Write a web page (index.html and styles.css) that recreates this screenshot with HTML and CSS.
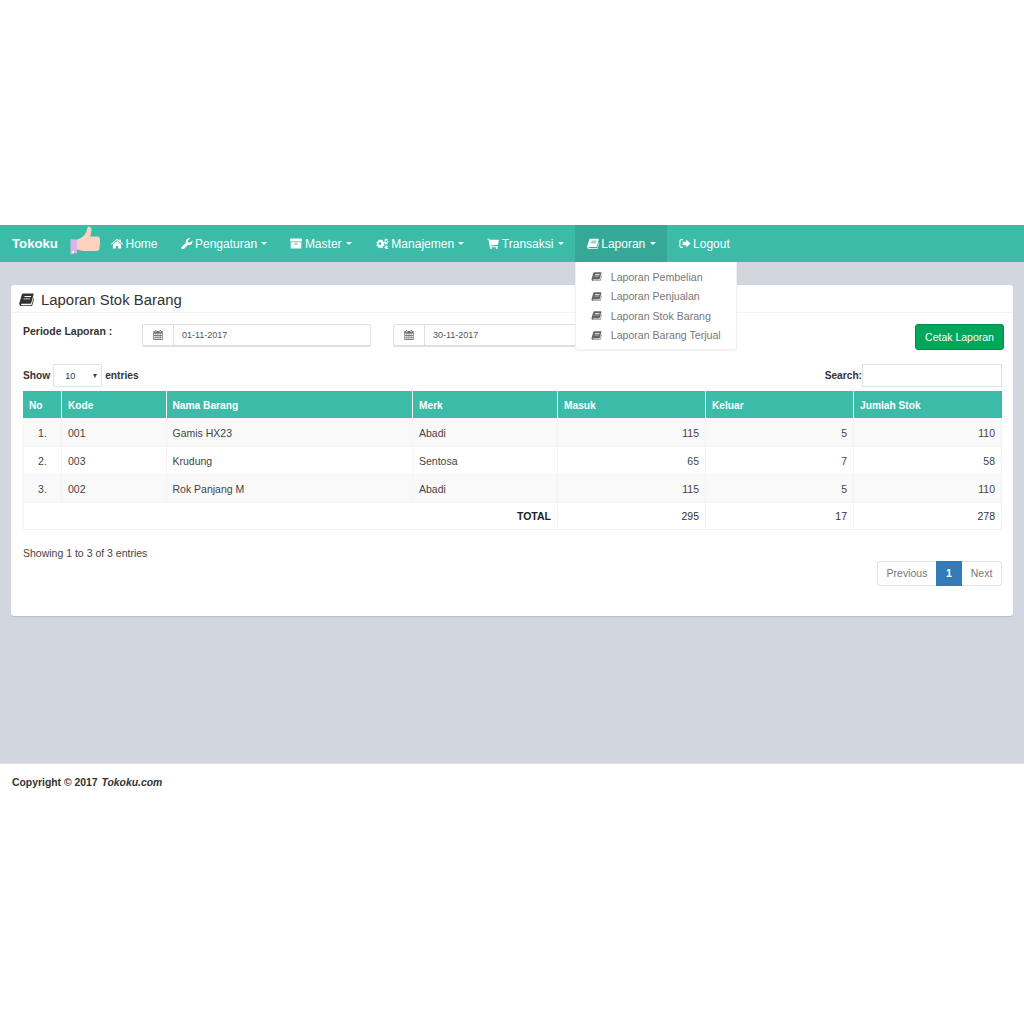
FILE: index.html
```html
<!DOCTYPE html>
<html lang="id">
<head>
<meta charset="utf-8">
<title>Tokoku - Laporan Stok Barang</title>
<link rel="stylesheet" href="styles.css">
</head>
<body>
<svg class="defs" width="0" height="0" aria-hidden="true">
  <defs>
    <symbol id="i-book" viewBox="0 0 16 14">
      <path d="M4.600 0.500H15c.5 0 .8.4.7.9l-2.500 9.200c-.2.700-.7 1.100-1.400 1.100H3.200c-.7 0-1.100.3-1.100.8s.4.800 1.100.8h9.200c.6 0 1-.3 1.200-.8l2-7.200.4.300c.2.200.2.400.2.700l-2.300 7.900c-.2.600-.7 1-1.300 1H2.900C1.400 14 .2 12.900.2 11.600c0-.3 0-.6.1-.9L3 1.700C3.200 1 3.800.5 4.600.5zM5.900 3.200l-.3 1h7l.3-1h-7zM5 5.800l-.3 1h7l.3-1H5z" fill-rule="evenodd"/>
    </symbol>
    <symbol id="i-cal" viewBox="0 0 14 14">
      <path d="M3 0h1.500v2H3zM9.500 0H11v2H9.500zM.5 1.500h2V3h2.500V1.500h4V3h2.500V1.500h2V14H.500zM1.500 5v2h2V5zm3 0v2h2V5zm3 0v2h2V5zm3 0v2h2V5zm-9 3v2h2V8zm3 0v2h2V8zm3 0v2h2V8zm3 0v2h2V8zm-9 3v2h2v-2zm3 0v2h2v-2zm3 0v2h2v-2zm3 0v2h2v-2z" fill-rule="evenodd"/>
    </symbol>
  </defs>
</svg>

<div class="app">
  <nav class="navbar">
    <a class="brand">Tokoku</a>
    <svg class="thumb" viewBox="0 0 30 30" aria-hidden="true">
      <path d="M7 13.500c4-1 7-3.500 9-7 1-2 1-4.500 2-5.500 1.500-1 3.500.2 3.500 2.500 0 2.500-.8 5-1.300 7h7.300c1.500 0 2.500 1 2.300 2.300l.7 1.200-.6 2.300.4 2-.9 2.200.2 2c-.3 1.800-1.500 2.500-3 2.500H15c-3 0-5-1-8-1.500z" fill="#fdd2c0"/>
      <path d="M.5 13l6.500.5v13.500l-6.500 1.500z" fill="#d9b3ec"/>
      <circle cx="3" cy="26" r="1" fill="#fff"/>
    </svg>
    <ul class="menu">
      <li><a class="item">
        <svg class="ico" viewBox="0 0 16 14"><path d="M8 .5l3 2.700V1.500h2v3.500l3 2.700-.8.900L8 2.300 .8 8.600 0 7.700zM2.500 8.500L8 3.700l5.500 4.800v5H9.500v-3.500h-3v3.500h-4z"/></svg>
        Home</a></li>
      <li><a class="item">
        <svg class="ico" viewBox="0 0 14 14"><path d="M13.800 3.300c.5 1.700 0 3.400-1.200 4.500-1.200 1.100-2.800 1.400-4.300.9L3 14c-.8.700-2 .7-2.700 0-.7-.8-.7-2 0-2.700l5.300-5.300C5.100 4.500 5.500 2.900 6.600 1.700 7.700.5 9.400 0 11 .5L8 3.500l.5 2.200 2.200.5z"/></svg>
        Pengaturan <span class="caret"></span></a></li>
      <li><a class="item">
        <svg class="ico" viewBox="0 0 14 13"><path d="M0 .5h14v3.500H0zM.7 5h12.600v7.500H.7zM5 6.500v1.300h4V6.500z" fill-rule="evenodd"/></svg>
        Master <span class="caret"></span></a></li>
      <li><a class="item">
        <svg class="ico ico-wide" viewBox="0 0 16 13"><path d="M5.500 2l1.500.4.700-.7 1.200.7-.3 1 1 1.100 1-.2.500 1.300-.9.600v1.500l.9.600-.5 1.300-1-.2-1 1.100.3 1-1.200.7-.7-.7-1.500.0-.7.7-1.200-.7.3-1-1-1.100-1 .2-.5-1.300.9-.6V6.200l-.9-.6.500-1.300 1 .2 1-1.100-.3-1 1.200-.7zM5.500 5a1.700 1.700 0 1 0 0 3.400 1.700 1.700 0 0 0 0-3.400zM13 .3l.5 1 1-.2.400.8-.7.7.3.800 1 .2v1l-1 .2-.3.800.7.7-.4.800-1-.2-.5 1h-.6l-.5-1-1-.2.200-4 .2-.4-.2-1 .8-.5.7.7.200-.1zM13 3a1 1 0 1 0 0 2 1 1 0 0 0 0-2zM13 8.500l.5.9 1-.1.300.9-.7.600.2.800.9.300-.1 1-1 .1-.4.700-.9-.2-.3-1-.8-.2-.8-.7.200-1 .8-.3.300-.8z" fill-rule="evenodd"/></svg>
        Manajemen <span class="caret"></span></a></li>
      <li><a class="item">
        <svg class="ico" viewBox="0 0 15 14"><path d="M0 .8h2.800l.4 1.500H15l-1.200 6.200-9.300 1 .3 1h9v1.200H3.500L1.800 2H0z"/><circle cx="4.800" cy="12.700" r="1.300"/><circle cx="12.200" cy="12.700" r="1.300"/></svg>
        Transaksi <span class="caret"></span></a></li>
      <li class="open"><a class="item item-active">
        <svg class="ico"><use href="#i-book"/></svg>
        Laporan <span class="caret"></span></a>
        <ul class="dropdown">
          <li><svg class="dd-ico"><use href="#i-book"/></svg>Laporan Pembelian</li>
          <li><svg class="dd-ico"><use href="#i-book"/></svg>Laporan Penjualan</li>
          <li><svg class="dd-ico"><use href="#i-book"/></svg>Laporan Stok Barang</li>
          <li><svg class="dd-ico"><use href="#i-book"/></svg>Laporan Barang Terjual</li>
        </ul>
      </li>
      <li><a class="item">
        <svg class="ico" viewBox="0 0 15 13"><path d="M5 1H3C1.500 1 .5 2 .5 3.500v6C.5 11 1.500 12 3 12h2v-1.300H3c-.8 0-1.200-.4-1.200-1.200v-6c0-.8.4-1.200 1.200-1.200h2zM9 1.500l5.500 5-5.500 5V8.800H4.500V4.200H9z"/></svg>
        Logout</a></li>
    </ul>
  </nav>

  <main class="content">
    <section class="card">
      <h1 class="card-title"><svg class="title-ico"><use href="#i-book"/></svg>Laporan Stok Barang</h1>
      <div class="card-body">
        <div class="period">
          <label class="period-label">Periode Laporan :</label>
          <div class="date"><span class="date-addon"><svg class="cal"><use href="#i-cal"/></svg></span><span class="date-val">01-11-2017</span></div>
          <div class="date"><span class="date-addon"><svg class="cal"><use href="#i-cal"/></svg></span><span class="date-val">30-11-2017</span></div>
          <a class="btn-print">Cetak Laporan</a>
        </div>
        <div class="tools">
          <div class="length">Show <span class="select">10<i class="sel-arrow"></i></span> entries</div>
          <div class="search">Search:<span class="search-input"></span></div>
        </div>
        <table class="table">
          <colgroup>
            <col class="c1"><col class="c2"><col class="c3"><col class="c4"><col class="c5"><col class="c6"><col class="c7">
          </colgroup>
          <thead>
            <tr><th>No</th><th>Kode</th><th>Nama Barang</th><th>Merk</th><th>Masuk</th><th>Keluar</th><th>Jumlah Stok</th></tr>
          </thead>
          <tbody>
            <tr class="odd"><td class="ctr">1.</td><td>001</td><td>Gamis HX23</td><td>Abadi</td><td class="num">115</td><td class="num">5</td><td class="num">110</td></tr>
            <tr><td class="ctr">2.</td><td>003</td><td>Krudung</td><td>Sentosa</td><td class="num">65</td><td class="num">7</td><td class="num">58</td></tr>
            <tr class="odd"><td class="ctr">3.</td><td>002</td><td>Rok Panjang M</td><td>Abadi</td><td class="num">115</td><td class="num">5</td><td class="num">110</td></tr>
            <tr class="total"><td colspan="4" class="num"><strong>TOTAL</strong></td><td class="num">295</td><td class="num">17</td><td class="num">278</td></tr>
          </tbody>
        </table>
        <div class="info">Showing 1 to 3 of 3 entries</div>
        <div class="pager">
          <a class="pg pg-first">Previous</a><a class="pg pg-on">1</a><a class="pg pg-last">Next</a>
        </div>
      </div>
    </section>
  </main>

  <footer class="footer"><strong>Copyright © 2017 <em class="site">Tokoku.com</em></strong></footer>
</div>
</body>
</html>
```
FILE: styles.css
```css
* { box-sizing: border-box; }
html, body { margin: 0; background: #fff; }
body {
  font-family: "Liberation Sans", Arial, sans-serif;
  font-size: 10.500px;
  color: #333;
  height: 1024px;
  overflow: hidden;
}
.defs { display: block; height: 0; }
.app { padding-top: 225px; }

/* navbar */
.navbar {
  display: flex;
  align-items: center;
  height: 37px;
  background: #3cbba9;
  color: #fff;
}
.brand { font-size: 13.200px; font-weight: bold; margin-left: 12px; width: 58px; }
.thumb { width: 30px; height: 30px; margin-top: -6px; }
.menu { display: flex; list-style: none; margin: 0; padding: 0; height: 100%; }
.menu > li { position: relative; }
.item {
  display: flex;
  align-items: center;
  gap: 2.500px;
  height: 37px;
  padding: 0 11px 0 12px;
  font-size: 12px;
  white-space: nowrap;
}
.menu > li:first-child .item { padding-left: 11px; }
.item-active { background: #36a898; }
.ico { width: 12px; height: 11px; fill: #fff; flex: none; }
.ico-wide { width: 14px; }
.caret {
  display: inline-block;
  width: 0;
  height: 0;
  margin-left: 1.800px;
  border-top: 3.500px solid #fff;
  border-left: 3.500px solid transparent;
  border-right: 3.500px solid transparent;
}
.dropdown {
  position: absolute;
  left: 0;
  top: 37px;
  z-index: 5;
  width: 162px;
  margin: 0;
  padding: 5px 0 4px;
  list-style: none;
  background: #fff;
  border: 1px solid #f0f1f2;
  border-top: 0;
  border-radius: 0 0 3px 3px;
  box-shadow: 0 1px 2px rgba(0, 0, 0, .06);
  color: #777;
  font-size: 10.600px;
}
.dropdown li {
  display: flex;
  align-items: center;
  height: 19.500px;
  padding-left: 15px;
  white-space: nowrap;
}
.dd-ico { width: 11px; height: 9px; fill: #666; margin-right: 9px; flex: none; }

/* content */
.content {
  height: 501px;
  padding: 23px 11px 0;
  background: #d2d6de;
}
.card {
  position: relative;
  height: 331px;
  background: #fff;
  border-radius: 3px;
  box-shadow: 0 1px 1px rgba(0, 0, 0, .12);
}
.card-title {
  display: flex;
  align-items: center;
  height: 28px;
  margin: 0;
  padding: 2px 0 0 8px;
  border-bottom: 1px solid #f4f4f4;
  font-size: 14.900px;
  font-weight: normal;
  color: #333;
}
.title-ico { width: 15px; height: 13px; fill: #333; margin-right: 7px; }
.card-body { padding: 11px 11px 0 12px; }

.period { display: flex; align-items: flex-start; height: 40px; }
.period-label { width: 119px; padding-top: 1px; font-weight: bold; line-height: 12px; font-size: 10.500px; }
.date {
  display: flex;
  width: 229px;
  height: 23px;
  margin-right: 22px;
  border: 1px solid #dcdfe4;
  border-bottom-width: 2px;
  border-radius: 2px;
  color: #555;
  font-size: 9px;
}
.date-addon {
  display: flex;
  align-items: center;
  justify-content: center;
  width: 31px;
  border-right: 1px solid #dcdfe4;
}
.cal { width: 10px; height: 10px; fill: #666; }
.date-val { display: flex; align-items: center; padding-left: 8px; }
.btn-print {
  display: flex;
  align-items: center;
  justify-content: center;
  width: 89px;
  height: 26px;
  margin-left: auto;
  margin-right: -2px;
  background: #00a65a;
  border: 1px solid #008d4c;
  border-radius: 3px;
  color: #fff;
  font-size: 10.500px;
}

.tools {
  display: flex;
  justify-content: space-between;
  align-items: center;
  height: 23px;
  font-weight: bold;
  color: #333;
  font-size: 10.200px;
}
.length { display: flex; align-items: center; gap: 3px; }
.select {
  position: relative;
  display: flex;
  align-items: center;
  width: 49px;
  height: 23px;
  padding-left: 11px;
  border: 1px solid #dfe2e6;
  border-radius: 1px;
  font-size: 9px;
  font-weight: normal;
}
.sel-arrow {
  position: absolute;
  right: 4px;
  top: 9px;
  border-top: 4px solid #444;
  border-left: 2.500px solid transparent;
  border-right: 2.500px solid transparent;
}
.search { display: flex; align-items: center; }
.search-input { width: 140px; height: 23px; border: 1px solid #dfe2e6; background: #fff; }

.table {
  width: 979px;
  margin-top: 4px;
  border-collapse: separate;
  border-spacing: 0;
  table-layout: fixed;
  font-size: 10.500px;
}
.c1 { width: 38px; }
.c2 { width: 104.500px; }
.c3 { width: 246.500px; }
.c4 { width: 145px; }
.c5 { width: 148px; }
.c6 { width: 148px; }
.c7 { width: 149px; }
.table th {
  height: 27px;
  padding: 1px 6px 0;
  background: #3cbba9;
  color: #fff;
  font-size: 10.200px;
  font-weight: bold;
  text-align: left;
  border-left: 1px solid #fff;
}
.table th:first-child { border-left: 0; }
.table td {
  height: 28px;
  padding: 0 6px;
  border-left: 1px solid #f4f4f4;
  border-top: 1px solid #f4f4f4;
  color: #444;
}
.table td:last-child { border-right: 1px solid #f4f4f4; }
.table .total td { height: 27.500px; border-bottom: 1px solid #f4f4f4; color: #333; }
.table .total strong { color: #222; }
.odd td { background: #f9f9f9; }
.ctr { text-align: center; }
.num { text-align: right; }

.info { margin-top: 16px; line-height: 14px; color: #444; }
.pager { display: flex; justify-content: flex-end; margin: 1px 0 0; }
.pg {
  display: flex;
  align-items: center;
  justify-content: center;
  height: 25px;
  color: #777;
  background: #fff;
  border: 1px solid #e4e4e4;
}
.pg-first { width: 59px; border-radius: 3px 0 0 3px; border-right: 0; }
.pg-on { width: 26px; background: #337ab7; border-color: #337ab7; color: #fff; font-weight: bold; }
.pg-last { width: 40px; border-left: 0; border-radius: 0 3px 3px 0; }

.footer {
  padding: 13px 12px 0;
  font-size: 10.400px;
  line-height: 12px;
  color: #333;
  border-top: 1px solid #e3e5e9;
}
.site { margin-left: 1px; }
```
